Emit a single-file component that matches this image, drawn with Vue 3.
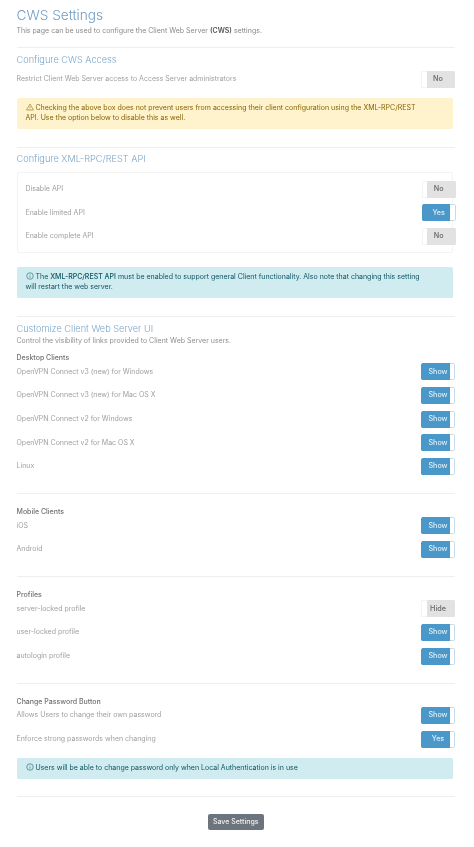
<script setup>
const desktop = [
  { label: 'OpenVPN Connect v3 (new) for Windows', text: 'Show', on: true },
  { label: 'OpenVPN Connect v3 (new) for Mac OS X', text: 'Show', on: true },
  { label: 'OpenVPN Connect v2 for Windows', text: 'Show', on: true },
  { label: 'OpenVPN Connect v2 for Mac OS X', text: 'Show', on: true },
  { label: 'Linux', text: 'Show', on: true },
]
const mobile = [
  { label: 'iOS', text: 'Show', on: true },
  { label: 'Android', text: 'Show', on: true },
]
const profiles = [
  { label: 'server-locked profile', text: 'Hide', on: false },
  { label: 'user-locked profile', text: 'Show', on: true },
  { label: 'autologin profile', text: 'Show', on: true },
]
const password = [
  { label: 'Allows Users to change their own password', text: 'Show', on: true },
  { label: 'Enforce strong passwords when changing', text: 'Yes', on: true },
]
const api = [
  { label: 'Disable API', text: 'No', on: false },
  { label: 'Enable limited API', text: 'Yes', on: true },
  { label: 'Enable complete API', text: 'No', on: false },
]
const groups = [
  { title: 'Desktop Clients', rows: desktop, cls: 'g-desktop' },
  { title: 'Mobile Clients', rows: mobile, cls: 'g-mobile' },
  { title: 'Profiles', rows: profiles, cls: 'g-profiles' },
]
</script>

<template>
  <main class="page">
    <h1 class="title">CWS Settings</h1>
    <p class="sub">This page can be used to configure the Client Web Server <b>(CWS)</b> settings.</p>
    <hr class="rule r1" />

    <h2 class="head h1st">Configure CWS Access</h2>
    <div class="row first">
      <span class="label">Restrict Client Web Server access to Access Server administrators</span>
      <span class="toggle off"><i class="handle"></i><span class="face">No</span></span>
    </div>
    <div class="alert warn">
      <span class="line">
        <svg class="ico" viewBox="0 0 16 16" fill="none" stroke="currentColor" stroke-width="1.1"><path d="M8 2 L15 14 H1 Z" stroke-linejoin="round"/><path d="M8 6.5v4M8 11.8v.9"/></svg>
        Checking the above box does not prevent users from accessing their client configuration using the XML-RPC/REST
      </span>
      <span class="line">API. Use the option below to disable this as well.</span>
    </div>
    <hr class="rule r2" />

    <h2 class="head h2nd">Configure XML-RPC/REST API</h2>
    <div class="box">
      <div v-for="r in api" :key="r.label" class="row boxrow">
        <span class="label">{{ r.label }}</span>
        <span class="toggle" :class="r.on ? 'on' : 'off'">
          <template v-if="r.on"><span class="face">{{ r.text }}</span><i class="handle"></i></template>
          <template v-else><i class="handle"></i><span class="face">{{ r.text }}</span></template>
        </span>
      </div>
    </div>
    <div class="alert info a2">
      <span class="line">
        <svg class="ico" viewBox="0 0 16 16" fill="none" stroke="currentColor" stroke-width="1.1"><circle cx="8" cy="8" r="6.5"/><path d="M8 7v4.5M8 4.5v1"/></svg>
        The <b>XML-RPC/REST API</b> must be enabled to support general Client functionality. Also note that changing this setting
      </span>
      <span class="line">will restart the web server.</span>
    </div>
    <hr class="rule r3" />

    <h2 class="head h3rd">Customize Client Web Server UI</h2>
    <p class="desc">Control the visibility of links provided to Client Web Server users.</p>

    <section v-for="g in groups" :key="g.title" class="group" :class="g.cls">
      <h3 class="gtitle">{{ g.title }}</h3>
      <div v-for="r in g.rows" :key="r.label" class="row">
        <span class="label">{{ r.label }}</span>
        <span class="toggle" :class="r.on ? 'on' : 'off'">
          <template v-if="r.on"><span class="face">{{ r.text }}</span><i class="handle"></i></template>
          <template v-else><i class="handle"></i><span class="face">{{ r.text }}</span></template>
        </span>
      </div>
      <hr class="rule grule" />
    </section>

    <section class="group g-pass">
      <h3 class="gtitle">Change Password Button</h3>
      <div v-for="r in password" :key="r.label" class="row">
        <span class="label">{{ r.label }}</span>
        <span class="toggle on"><span class="face">{{ r.text }}</span><i class="handle"></i></span>
      </div>
    </section>
    <div class="alert info a3">
      <span class="line">
        <svg class="ico" viewBox="0 0 16 16" fill="none" stroke="currentColor" stroke-width="1.1"><circle cx="8" cy="8" r="6.5"/><path d="M8 7v4.5M8 4.5v1"/></svg>
        Users will be able to change password only when Local Authentication is in use
      </span>
    </div>
    <hr class="rule r4" />
    <div class="actions"><button class="save" type="button">Save Settings</button></div>
  </main>
</template>

<style scoped>
.page {
  box-sizing: border-box;
  width: 474px;
  height: 847px;
  padding: 6px 19px 0 16.5px;
  overflow: hidden;
  background: #fff;
  font-family: Inter, "Open Sans", sans-serif;
  font-size: 7px;
  line-height: 12px;
  color: #9a9a9a;
  filter: blur(0.5px);
}
.title, .head, .gtitle, .sub, .desc { margin: 0; }
.title { font-size: 13.7px; line-height: 18px; font-weight: 300; color: #6f9cc2; }
.sub { margin-top: 0.7px; line-height: 12px; color: #8a8a8a; }
.sub b { color: #555; font-weight: 600; }
.rule { border: 0; border-top: 1px solid #eeeeee; margin: 0; }
.r1 { margin-top: 10.6px; }
.head { font-size: 9.2px; line-height: 14px; font-weight: 300; color: #7ba6c9; }
.h1st { margin-top: 4.7px; }
.h2nd { margin-top: 4px; }
.h3rd { margin-top: 5px; }
.row { display: flex; justify-content: space-between; align-items: center; height: 17px; }
.first { margin-top: 4px; }
.label { color: #a0a0a0; }
.toggle { display: flex; width: 34px; height: 17px; font-size: 7.2px; flex: none; border-radius: 1.5px; overflow: hidden; }
.face { flex: 1; display: flex; align-items: center; justify-content: center; }
.on .face { background: #4a97c9; color: #dfeef7; font-weight: 500; border-radius: 1.5px 0 0 1.5px; padding-left: 5.5px; }
.off .face { background: #e2e2e2; color: #666; font-weight: 500; padding-right: 5.5px; }
.handle { width: 5.5px; box-sizing: border-box; background: #fff; }
.off .handle { border: 1px solid #f4f4f4; border-right: 0; }
.on .handle { border: 1px solid #c6dbe9; border-left: 0; border-radius: 0 2px 2px 0; }
.alert { box-sizing: border-box; padding: 5px 9px 0; line-height: 10px; font-size: 7px; margin-right: 1.7px; border-radius: 1.5px; }
.line { display: block; white-space: nowrap; }
.warn { margin-top: 10.3px; height: 30.7px; background: #fff3cd; color: #856404; }
.info { background: #d1ecf1; color: #0c5460; }
.ico { width: 8px; height: 8px; vertical-align: -1px; }
.alert b { font-weight: 500; }
.r2 { margin-top: 18.3px; }
.box { box-sizing: border-box; height: 81.3px; margin: 5.7px 1.7px 0 0; padding: 7.7px 0 0 8px; border: 1px solid #f3f3f3; border-radius: 2px; display: flex; flex-direction: column; gap: 6.6px; }
.boxrow { margin-right: -3.3px; }
.a2 { margin-top: 13.7px; height: 31.3px; }
.r3 { margin-top: 17.4px; }
.desc { line-height: 12px; margin-top: -1px; color: #8f8f8f; }
.group { display: flex; flex-direction: column; }
.group .row { margin-bottom: 6.67px; }
.gtitle { font-size: 7px; line-height: 12px; font-weight: 500; color: #707070; }
.g-desktop { margin-top: 5.3px; }
.g-mobile, .g-profiles, .g-pass { margin-top: 12px; }
.grule { margin-top: 11.3px; }
.group .gtitle + .row { margin-top: -0.6px; }
.a3 { margin-top: 3.6px; height: 20.7px; }
.r4 { margin-top: 17.7px; }
.actions { display: flex; justify-content: center; margin-top: 16.6px; }
.save { width: 56px; height: 15.7px; padding: 0; border: 0; border-radius: 2px; background: #6c757d; color: #eee; font: 500 7px Inter, sans-serif; }
</style>
